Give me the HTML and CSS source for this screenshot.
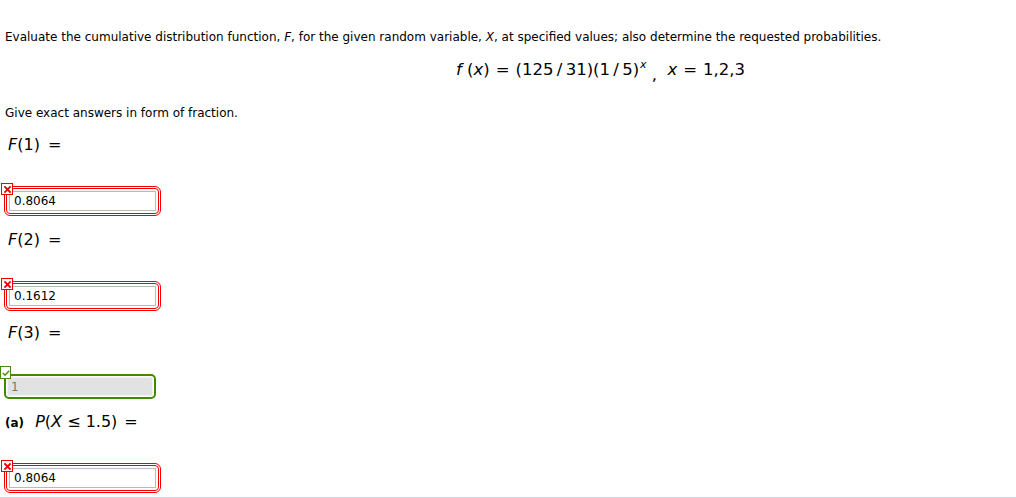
FILE: index.html
```html
<!DOCTYPE html>
<html>
<head>
<meta charset="utf-8">
<link rel="stylesheet" href="styles.css">
</head>
<body>
<div class="page">
  <p class="question">Evaluate the cumulative distribution function, <i>F</i>, for the given random variable, <i>X</i>, at specified values; also determine the requested probabilities.</p>
  <div class="formula-row">
    <span class="formula"><i>f</i>&nbsp;(<i>x</i>)<span class="eq">=</span>(125&#8201;/&#8201;31)(1&#8201;/&#8201;5)<sup class="exp"><i>x</i></sup><span class="comma">,</span>&nbsp;&nbsp;<i>x</i><span class="eq">=</span>1,2,3</span>
  </div>
  <p class="note">Give exact answers in form of fraction.</p>

  <div class="label math"><i>F</i>(1)<span class="eq2">=</span></div>
  <div class="field">
    <span class="badge bad"><svg width="7" height="7" viewBox="0 0 7 7"><path d="M1 1 L6 6 M6 1 L1 6" stroke="#e00" stroke-width="1.8" stroke-linecap="square"/></svg></span>
    <div class="ring red"><div class="ring-in red"><input class="answer" type="text" value="0.8064"></div></div>
  </div>

  <div class="label math"><i>F</i>(2)<span class="eq2">=</span></div>
  <div class="field">
    <span class="badge bad"><svg width="7" height="7" viewBox="0 0 7 7"><path d="M1 1 L6 6 M6 1 L1 6" stroke="#e00" stroke-width="1.8" stroke-linecap="square"/></svg></span>
    <div class="ring red"><div class="ring-in red"><input class="answer" type="text" value="0.1612"></div></div>
  </div>

  <div class="label math tight"><i>F</i>(3)<span class="eq2">=</span></div>
  <div class="field short">
    <span class="badge good"><svg width="8" height="6" viewBox="0 0 8 6"><path d="M0.8 3 L3 5.2 L7.2 0.8" stroke="#4a8a0a" stroke-width="1.4" fill="none"/></svg></span>
    <div class="ring green"><input class="answer done" type="text" value="1" disabled></div>
  </div>

  <div class="label part"><b class="tag">(a)</b> <span class="math"><i>P</i>(<i>X</i> &#8804; 1.5)<span class="eq2">=</span></span></div>
  <div class="field after-part">
    <span class="badge bad"><svg width="7" height="7" viewBox="0 0 7 7"><path d="M1 1 L6 6 M6 1 L1 6" stroke="#e00" stroke-width="1.8" stroke-linecap="square"/></svg></span>
    <div class="ring red"><div class="ring-in red"><input class="answer" type="text" value="0.8064"></div></div>
  </div>
  <div class="rule"></div>
</div>
</body>
</html>
```
FILE: styles.css
```css
html, body {
  margin: 0;
  padding: 0;
  background: #fff;
}
body {
  font-family: "DejaVu Sans", Verdana, sans-serif;
  color: #000;
  font-size: 12px;
  overflow: hidden;
}
.page {
  padding: 0 0 0 5px;
}
.question {
  margin: 0;
  padding-top: 30px;
  line-height: 15px;
  font-size: 12px;
}
.formula-row {
  padding-left: 180px;
  text-align: center;
  margin-top: 14px;
  height: 22px;
  line-height: 22px;
}
.formula {
  font-size: 16.5px;
}
.eq {
  margin: 0 6px;
}
.exp {
  font-size: 11px;
  vertical-align: 7px;
  line-height: 0;
  margin-left: 1px;
}
.comma {
  position: relative;
  top: 5px;
  margin-left: 5px;
}
.note {
  margin: 25px 0 0 0;
  line-height: 15px;
}
.label {
  font-size: 16px;
  line-height: 20px;
  padding-left: 3px;
}
.math {
  font-size: 16px;
}
.eq2 {
  margin-left: 8px;
}
.label.math {
  margin-top: 14px;
}
.label.math.tight {
  margin-top: 12px;
}
.label.part {
  margin-top: 13px;
  padding-left: 0;
}
.label.part .eq2 {
  margin-left: 7px;
}
.tag {
  font-size: 12px;
  margin-right: 6px;
}
.field {
  position: relative;
  padding: 3px 0 0 4px;
  margin: 28px 0 0 -5px;
  height: 30px;
}
.field.after-part {
  margin-top: 27px;
}
.field.short {
  height: 25px;
  padding-top: 8px;
  margin-top: 23px;
}
.badge {
  position: absolute;
  left: 1px;
  top: 0;
  width: 10px;
  height: 10px;
  border: 1px solid #e00;
  background: #fff;
  display: flex;
  align-items: center;
  justify-content: center;
  z-index: 2;
}
.badge.good {
  border-color: #4a8a0a;
  left: 0;
  width: 9px;
  height: 11px;
  top: 0;
}
.ring {
  display: inline-block;
  border-radius: 6px;
  padding: 1px;
}
.ring.red {
  border: 1px solid #e00;
}
.ring-in.red {
  border: 1px solid #e00;
  border-radius: 4px;
  padding: 2px;
}
.ring.green {
  border: 2px solid #3f8a00;
  border-radius: 5px;
  padding: 1px;
}
.answer {
  display: block;
  box-sizing: border-box;
  width: 147px;
  height: 20px;
  margin: 0;
  border: 1px solid #bbb;
  padding: 1px 4px;
  font-family: "DejaVu Sans", Verdana, sans-serif;
  font-size: 12px;
  color: #000;
  background: #fff;
  outline: none;
}
.answer.done {
  width: 146px;
  height: 19px;
  background: #e2e2e2;
  color: #777;
  border: 1px solid #f2f2f2;
  padding-left: 3px;
}
.rule {
  border-top: 1px solid #cdd6de;
  margin: 4px 0 0 -5px;
}
```
